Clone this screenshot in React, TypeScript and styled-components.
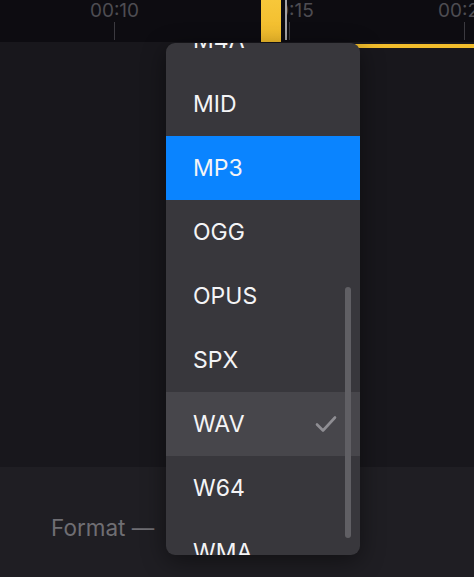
import React from "react";
import styled, { createGlobalStyle } from "styled-components";

const Global = createGlobalStyle`
  html, body { margin: 0; padding: 0; background: #19181d; }
  body { font-family: Inter, "Noto Sans", "Liberation Sans", sans-serif; -webkit-font-smoothing: antialiased; }
  * { box-sizing: border-box; }
`;

const Page = styled.div`
  position: relative;
  width: 474px;
  height: 577px;
  overflow: hidden;
  display: flex;
  flex-direction: column;
  background: #19181d;
`;

const Ruler = styled.div`
  position: relative;
  height: 42px;
  flex: none;
  background: #0d0c11;
  display: flex;
  padding-left: 27px;
  overflow: hidden;
`;

const Mark = styled.div`
  width: 175px;
  flex: none;
  display: flex;
  flex-direction: column;
  align-items: center;
  gap: 0;
`;

const MarkLabel = styled.span`
  font-size: 19px;
  line-height: 22px;
  height: 22px;
  color: #4d4c52;
  white-space: nowrap;
`;

const MarkTick = styled.div`
  width: 1px;
  height: 18px;
  background: #3b3a40;
`;

const Playhead = styled.div`
  position: absolute;
  left: 259px;
  top: 0;
  width: 28px;
  height: 43px;
  display: flex;
  align-items: flex-start;
  gap: 4px;
  padding-left: 2px;
  background: linear-gradient(90deg, transparent 0 2px, #0d0c11 2px 100%);
  background-size: 100% 42px;
  background-repeat: no-repeat;
  z-index: 2;
`;

const PlayheadHandle = styled.div`
  width: 20px;
  height: 43px;
  background: linear-gradient(#f7c73a, #f1bb2a);
`;

const PlayheadLine = styled.div`
  width: 2px;
  height: 40px;
  background: #a3a2a6;
`;

const Canvas = styled.div`
  position: relative;
  flex: 1;
  background: #18171c;
`;

const SelectionEdge = styled.div`
  position: absolute;
  left: 300px;
  right: 0;
  top: 2px;
  height: 4px;
  background: #f1bd2c;
`;

const Footer = styled.div`
  height: 110px;
  flex: none;
  background: #1f1e23;
  display: flex;
  align-items: center;
  padding: 10px 0 0 51px;
`;

const FieldLabel = styled.span`
  font-size: 22.5px;
  color: #6f6e73;
`;

const Menu = styled.div`
  position: absolute;
  left: 166px;
  top: 43px;
  width: 194px;
  height: 512px;
  border-radius: 9px;
  overflow: hidden;
  background: #38373c;
  box-shadow: 0 6px 24px rgba(0, 0, 0, 0.45);
  z-index: 3;
`;

const List = styled.ul`
  list-style: none;
  margin: -35px 0 0 0;
  padding: 0;
`;

const Item = styled.li<{ $state?: "active" | "selected" }>`
  height: 64px;
  display: flex;
  align-items: center;
  justify-content: space-between;
  padding: 0 23px 0 27px;
  font-size: 23px;
  color: #f4f4f6;
  background: ${(p) =>
    p.$state === "active" ? "#0a84ff" : p.$state === "selected" ? "#47464b" : "transparent"};
`;

const Check = styled.svg`
  width: 22px;
  height: 18px;
  flex: none;
`;

const Scrollbar = styled.div`
  position: absolute;
  left: 179px;
  top: 244px;
  width: 6px;
  height: 251px;
  border-radius: 3px;
  background: #605f64;
`;

const formats = ["M4A", "MID", "MP3", "OGG", "OPUS", "SPX", "WAV", "W64", "WMA"];
const marks = ["00:10", "00:15", "00:20"];

export default function App() {
  return (
    <Page>
      <Global />
      <Ruler>
        {marks.map((m) => (
          <Mark key={m}>
            <MarkLabel>{m}</MarkLabel>
            <MarkTick />
          </Mark>
        ))}
        <Playhead>
          <PlayheadHandle />
          <PlayheadLine />
        </Playhead>
      </Ruler>
      <Canvas>
        <SelectionEdge />
      </Canvas>
      <Footer>
        <FieldLabel>Format —</FieldLabel>
      </Footer>
      <Menu>
        <List>
          {formats.map((f) => (
            <Item
              key={f}
              $state={f === "MP3" ? "active" : f === "WAV" ? "selected" : undefined}
            >
              {f}
              {f === "WAV" && (
                <Check viewBox="0 0 22 18">
                  <path
                    d="M2 9.5 L8 15.5 L20 2.5"
                    fill="none"
                    stroke="#8f8e93"
                    strokeWidth="2.6"
                    strokeLinecap="round"
                    strokeLinejoin="round"
                  />
                </Check>
              )}
            </Item>
          ))}
        </List>
        <Scrollbar />
      </Menu>
    </Page>
  );
}
